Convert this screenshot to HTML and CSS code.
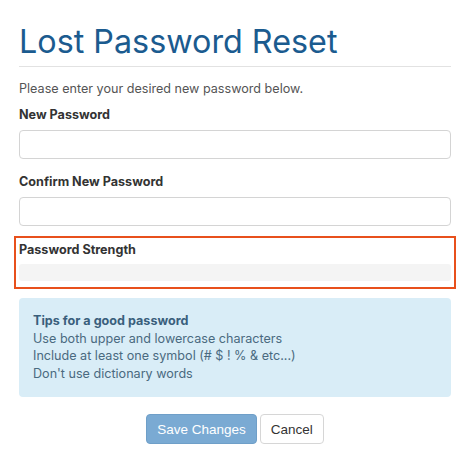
FILE: index.html
```html
<!DOCTYPE html>
<html>
<head>
<meta charset="utf-8">
<link rel="stylesheet" href="styles.css">
</head>
<body>
<div class="page">
  <h1 class="title">Lost Password Reset</h1>
  <p class="intro">Please enter your desired new password below.</p>
  <div class="field">
    <label class="label">New Password</label>
    <div class="input"></div>
  </div>
  <div class="field">
    <label class="label">Confirm New Password</label>
    <div class="input"></div>
  </div>
  <div class="strength">
    <label class="label">Password Strength</label>
    <div class="bar"></div>
  </div>
  <div class="tips">
    <strong class="tips-title">Tips for a good password</strong>
    <div>Use both upper and lowercase characters</div>
    <div>Include at least one symbol (# $ ! % &amp; etc...)</div>
    <div>Don't use dictionary words</div>
  </div>
  <div class="actions">
    <button class="btn btn-primary">Save Changes</button>
    <button class="btn btn-default">Cancel</button>
  </div>
</div>
</body>
</html>
```
FILE: styles.css
```css
html, body { margin: 0; padding: 0; background: #fff; }
body { font-family: Inter, "Noto Sans", sans-serif; color: #333; }
.page { width: 432px; padding: 0 0 0 19px; }
.title {
  margin: 0;
  padding-top: 22px;
  font-size: 32.3px;
  font-weight: 400;
  line-height: 40px;
  color: #1b5b8f;
  padding-bottom: 4px;
  border-bottom: 1px solid #e2e2e2;
}
.intro { margin: 13px 0 0; font-size: 12.6px; line-height: 18px; color: #555; }
.field { margin-top: 8px; }
.label { display: block; font-size: 12.6px; font-weight: 700; line-height: 18px; color: #333; margin-bottom: 6px; }
.field + .field { margin-top: 14px; }
.input { height: 27px; border: 1px solid #d4d4d4; border-radius: 4px; background: #fff; }
.strength {
  margin: 10px -5px 0;
  border: 2px solid #e8501c;
  padding: 3px 3px 6px;
}
.strength .label { margin-bottom: 5px; }
.bar { height: 17px; background: #f4f4f4; border-radius: 3px; }
.tips {
  margin-top: 9px;
  background: #d9edf7;
  border-radius: 4px;
  padding: 14px 14px 15px;
  color: #4a6a80;
  font-size: 12.6px;
  line-height: 17.5px;
}
.tips-title { display: block; color: #3a5f7c; font-weight: 700; }
.actions { display: flex; justify-content: center; gap: 3px; margin-top: 17px; }
.btn {
  font-family: "Liberation Sans", Arial, sans-serif;
  font-size: 13.5px;
  height: 30px;
  border-radius: 4px;
  padding: 0 10px;
  margin: 0;
}
.btn-primary { background: #7aaad3; border: 1px solid #6f9fc8; color: #fff; }
.btn-default { background: #fff; border: 1px solid #d6d6d6; color: #333; }
```
